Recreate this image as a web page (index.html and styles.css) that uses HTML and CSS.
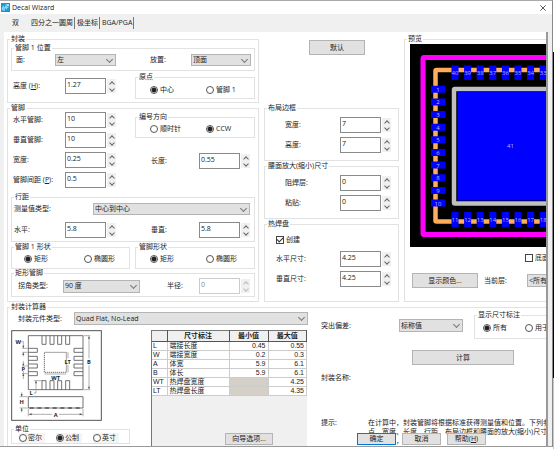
FILE: index.html
```html
<!DOCTYPE html>
<html lang="zh-CN">
<head>
<meta charset="utf-8">
<title>Decal Wizard</title>
<link rel="stylesheet" href="styles.css">
</head>
<body>
<div class="window">
  <header class="titlebar">
    <svg class="logo" viewBox="0 0 27 27" aria-hidden="true"><rect width="27" height="27" fill="#0e9bd8"/><path d="M4 22V14h5M9 20v-5h4v-5h6M5 10h4M16 19v-5h6M13 6h9v4" fill="none" stroke="#fff" stroke-width="2"/><circle cx="9" cy="21" r="2" fill="#fff"/><circle cx="21" cy="6" r="2.500" fill="#fff"/></svg>
    <h1>Decal Wizard</h1>
    <button class="close" aria-label="关闭"><svg viewBox="0 0 16 16"><path d="M1 1 15 15M15 1 1 15" fill="none" stroke="#222" stroke-width="2"/></svg></button>
  </header>
  <nav class="tabs">
    <a href="#dual">双</a><a href="#quad" class="active">四分之一圆周</a><a href="#polar">极坐标</a><a href="#bga">BGA/PGA</a>
  </nav>
  <main class="page">
    <div class="top">
      <div class="col">
        <fieldset class="decal">
          <legend>封装</legend>
          <fieldset class="place">
            <legend>管脚 1 位置</legend>
            <label for="side">面:</label>
            <span class="sel"><select id="side"><option>左</option></select></span>
            <label for="layer">放置:</label>
            <span class="sel"><select id="layer"><option>顶面</option></select></span>
          </fieldset>
          <div class="split">
            <div class="field"><label for="h">高度 (<u>H</u>):</label><span class="spin"><input id="h" value="1.27"><button aria-label="增加"></button><button aria-label="减少"></button></span></div>
            <fieldset class="radios"><legend>原点</legend><label><input type="radio" name="org" checked>中心</label><label><input type="radio" name="org">管脚 1</label></fieldset>
          </div>
        </fieldset>
        <fieldset class="pins">
          <legend>管脚</legend>
          <div class="split">
            <div class="stack">
              <div class="field"><label for="hp">水平管脚:</label><span class="spin"><input id="hp" value="10"><button aria-label="增加"></button><button aria-label="减少"></button></span></div>
              <div class="field"><label for="vp">垂直管脚:</label><span class="spin"><input id="vp" value="10"><button aria-label="增加"></button><button aria-label="减少"></button></span></div>
              <div class="field"><label for="pw">宽度:</label><span class="spin"><input id="pw" value="0.25"><button aria-label="增加"></button><button aria-label="减少"></button></span></div>
              <div class="field"><label for="pp">管脚间距 (<u>P</u>):</label><span class="spin"><input id="pp" value="0.5"><button aria-label="增加"></button><button aria-label="减少"></button></span></div>
            </div>
            <div class="direction">
              <fieldset class="radios"><legend>编号方向</legend><label><input type="radio" name="dir">顺时针</label><label><input type="radio" name="dir" checked>CCW</label></fieldset>
              <div class="field right"><label for="pl">长度:</label><span class="spin"><input id="pl" value="0.55"><button aria-label="增加"></button><button aria-label="减少"></button></span></div>
            </div>
          </div>
          <fieldset class="pitch">
            <legend>行距</legend>
            <div class="measure"><label for="mt">测量值类型:</label><span class="sel"><select id="mt"><option>中心到中心</option></select></span></div>
            <div class="split">
              <div class="field"><label for="rh">水平:</label><span class="spin"><input id="rh" value="5.8"><button aria-label="增加"></button><button aria-label="减少"></button></span></div>
              <div class="field right"><label for="rv">垂直:</label><span class="spin"><input id="rv" value="5.8"><button aria-label="增加"></button><button aria-label="减少"></button></span></div>
            </div>
          </fieldset>
          <div class="split shapes">
            <fieldset class="radios"><legend>管脚 1 形状</legend><label><input type="radio" name="s1" checked>矩形</label><label><input type="radio" name="s1">椭圆形</label></fieldset>
            <fieldset class="radios"><legend>管脚形状</legend><label><input type="radio" name="s2" checked>矩形</label><label><input type="radio" name="s2">椭圆形</label></fieldset>
          </div>
          <fieldset class="corner">
            <legend>矩形管脚</legend>
            <label for="ct">拐角类型:</label><span class="sel"><select id="ct"><option>90 度</option></select></span>
            <label for="rad">半径:</label><span class="spin off"><input id="rad" value="0" disabled><button aria-label="增加" disabled></button><button aria-label="减少" disabled></button></span>
          </fieldset>
        </fieldset>
      </div>
      <div class="col mid">
        <button class="btn default">默认</button>
        <fieldset class="sizes">
          <legend>布局边框</legend>
          <div class="field"><label for="bw">宽度:</label><span class="spin"><input id="bw" value="7"><button aria-label="增加"></button><button aria-label="减少"></button></span></div>
          <div class="field"><label for="bh">高度:</label><span class="spin"><input id="bh" value="7"><button aria-label="增加"></button><button aria-label="减少"></button></span></div>
        </fieldset>
        <fieldset class="sizes">
          <legend>腰面放大(缩小)尺寸</legend>
          <div class="field"><label for="sm">阻焊层:</label><span class="spin"><input id="sm" value="0"><button aria-label="增加"></button><button aria-label="减少"></button></span></div>
          <div class="field"><label for="pm">粘贴:</label><span class="spin"><input id="pm" value="0"><button aria-label="增加"></button><button aria-label="减少"></button></span></div>
        </fieldset>
        <fieldset class="sizes thermal">
          <legend>热焊盘</legend>
          <label class="check"><input type="checkbox" checked>创建</label>
          <div class="field"><label for="th">水平尺寸:</label><span class="spin"><input id="th" value="4.25"><button aria-label="增加"></button><button aria-label="减少"></button></span></div>
          <div class="field"><label for="tv">垂直尺寸:</label><span class="spin"><input id="tv" value="4.25"><button aria-label="增加"></button><button aria-label="减少"></button></span></div>
        </fieldset>
      </div>
      <fieldset class="preview">
        <legend>预览</legend>
        <svg class="canvas" viewBox="0 0 136 203" preserveAspectRatio="xMinYMin slice" role="img" aria-label="预览">
          <rect width="400" height="203" fill="#000"/>
          <rect x="13" y="13.500" width="300" height="177" rx="1" fill="none" stroke="#f0f" stroke-width="5"/>
          <rect x="25.500" y="26" width="300" height="151.500" rx="1" fill="none" stroke="#ffad5b" stroke-width="4.500"/>
          <rect x="44" y="45" width="300" height="114.500" rx="1" fill="none" stroke="#c0c0c0" stroke-width="4.500"/>
          <rect x="47.500" y="47.500" width="300" height="109" fill="#00f"/>
          <path d="M45 21.500v14.500M57.600 21.500v14.500M70.200 21.500v14.500M82.800 21.500v14.500M95.400 21.500v14.500M108 21.500v14.500M120.600 21.500v14.500M133.200 21.500v14.500M45 168v15M57.600 168v15M70.200 168v15M82.800 168v15M95.400 168v15M108 168v15M120.600 168v15M133.200 168v15M21 45.300h14.500M21 57.900h14.500M21 70.500h14.500M21 83.200h14.500M21 95.800h14.500M21 108.500h14.500M21 121.100h14.500M21 133.800h14.500M21 146.400h14.500M21 159h14.500" stroke="#00f" stroke-width="7"/>
          <g class="nums">
            <text x="45" y="31">40</text><text x="57.600" y="31">39</text><text x="70.200" y="31">38</text><text x="82.800" y="31">37</text><text x="95.400" y="31">36</text><text x="108" y="31">35</text><text x="120.600" y="31">34</text><text x="133.200" y="31">33</text>
            <text x="45" y="178">11</text><text x="57.600" y="178">12</text><text x="70.200" y="178">13</text><text x="82.800" y="178">14</text><text x="95.400" y="178">15</text><text x="108" y="178">16</text><text x="120.600" y="178">17</text><text x="133.200" y="178">18</text>
            <text x="28" y="47.500">1</text><text x="28" y="60">2</text><text x="28" y="73">3</text><text x="28" y="85.500">4</text><text x="28" y="98">5</text><text x="28" y="111">6</text><text x="28" y="123.500">7</text><text x="28" y="136">8</text><text x="28" y="149">9</text><text x="28" y="161.500">10</text>
            <text x="100.500" y="104">41</text>
          </g>
        </svg>
        <label class="check bottom"><input type="checkbox">底面</label>
        <div class="colors"><button class="btn">显示颜色...</button><label for="cur">当前层:</label><span class="sel"><select id="cur"><option>&lt;所有层&gt;</option></select></span></div>
      </fieldset>
    </div>
    <fieldset class="calc">
      <legend>封装计算器</legend>
      <div class="calc-grid">
        <section class="left">
          <div class="type"><label for="pt">封装元件类型:</label><span class="sel"><select id="pt"><option>Quad Flat, No-Lead</option></select></span></div>
          <div class="parts">
            <div class="drawing">
              <svg viewBox="34 75 273 273" role="img" aria-label="QFN">
                <rect x="36" y="77" width="269" height="269" fill="#fff" stroke="#555" stroke-width="3"/>
                <g fill="none" stroke="#555" stroke-width="2.500">
                  <path d="M86 92H250V254H86ZM127 92v26h12V92M151 92v26h12V92M174 92v26h12V92M198 92v26h12V92M127 254v-27h12v27M151 254v-27h12v27M174 254v-27h12v27M198 254v-27h12v27M86 130h27v12H86M86 154h27v12H86M86 177h27v12H86M86 200h27v12H86M250 130h-27v12h27M250 154h-27v12h27M250 177h-27v12h27M250 200h-27v12h27M86 275H250V309H86Z"/>
                  <path d="M134 142H200V202H134Z" stroke-dasharray="4 2"/>
                  <path d="M90 309H250" stroke-width="4" stroke-dasharray="12 11"/>
                </g>
                <g fill="none" stroke="#888" stroke-width="2">
                  <path d="M252 92h20M252 254h20M268 94v66M268 181v71M86 312v22M250 312v22M88 328h70M178 328h70M205 142v18M205 180v22M134 207h66M62 110h9v18M67 130h17M67 142h17M71 144v10M71 168v14M67 183h17M67 206h17M71 198v24M109 227v26M103 227h24M109 256v8h-7M60 275h24M60 309h24M66 262v12M66 310v12"/>
                </g>
                <path d="M265 101l3-8 3 8zM265 245l3 8 3-8zM96 325l-9 3 9 3zM240 325l9 3-9 3zM68 122l3 8 3-8zM68 150l3-8 3 8zM68 176l3 7 3-7zM68 213l3-7 3 7zM106 235l3-8 3 8zM63 267l3 8 3-8zM63 317l3-8 3 8z" fill="#555"/>
                <g class="dims"><text x="56" y="116">W</text><text x="71" y="199">P</text><text x="204" y="176">LT</text><text x="168" y="224">WT</text><text x="94" y="271">L</text><text x="66" y="297">H</text><text x="168" y="335">A</text><text x="268" y="177">B</text></g>
              </svg>
              <fieldset class="units"><legend>单位</legend><label><input type="radio" name="u">密尔</label><label><input type="radio" name="u" checked>公制</label><label><input type="radio" name="u">英寸</label></fieldset>
            </div>
            <div class="sheet">
              <table>
                <thead><tr><th></th><th>尺寸标注</th><th>最小值</th><th>最大值</th></tr></thead>
                <tbody>
                  <tr><td>L</td><td>端接长度</td><td>0.45</td><td>0.55</td></tr>
                  <tr><td>W</td><td>端接宽度</td><td>0.2</td><td>0.3</td></tr>
                  <tr><td>A</td><td>体宽</td><td>5.9</td><td>6.1</td></tr>
                  <tr><td>B</td><td>体长</td><td>5.9</td><td>6.1</td></tr>
                  <tr><td>WT</td><td>热焊盘宽度</td><td class="na"></td><td>4.25</td></tr>
                  <tr><td>LT</td><td>热焊盘长度</td><td class="na"></td><td>4.35</td></tr>
                </tbody>
              </table>
              <button class="btn">向导选项...</button>
            </div>
          </div>
        </section>
        <section class="result">
          <div class="bias">
            <label for="pb">突出偏差:</label><span class="sel"><select id="pb"><option>标称值</option></select></span>
            <fieldset class="radios"><legend>显示尺寸标注</legend><label><input type="radio" name="d" checked>所有</label><label><input type="radio" name="d">用于</label></fieldset>
          </div>
          <button class="btn run">计算</button>
          <p class="name">封装名称:</p>
          <div class="tip"><span>提示:</span><p>在计算中，封装管脚将根据标准获得测量值和位置。下列参数<br>点、宽度、长度、行距、布局边框和腰面的放大(缩小)尺寸。<br><span class="tail">，</span></p></div>
          <div class="actions"><button class="btn ok">确定</button><button class="btn">取消</button><button class="btn">帮助(<u>H</u>)</button></div>
        </section>
      </div>
    </fieldset>
  </main>
</div>
</body>
</html>
```
FILE: styles.css
```css
* { box-sizing: border-box; }
html { background: #fff; }
body {
  margin: 0;
  min-height: 100vh;
  display: flex;
  padding: 0 1px 2px 0;
  overflow: hidden;
  background: linear-gradient(#fff 52px, #000 52px, #000 378px, #c4c8d4 378px) right top / 1px 100% no-repeat;
  color: #222;
  font: 7px/8px "Open Sans", "Noto Sans CJK SC", sans-serif;
}
input, select, button { font: inherit; color: inherit; margin: 0; border-radius: 0; }
/* --in is a group's left inset; its caption is pulled back over it */
fieldset { --in: 0px; margin: 0; padding: 0 0 0 var(--in); min-width: 0; border: 1px solid #e2e2e2; }
legend { margin-left: calc(2px - var(--in)); padding: 0 1px; height: 8px; white-space: nowrap; }
label { white-space: nowrap; }
p { margin: 0; }

.window {
  flex: 1;
  min-width: 0;
  display: flex;
  flex-direction: column;
  background: #f0f0f0;
  border-top: 1px solid #aaa;
  border-right: 1px solid #888;
  border-bottom: 1px solid #999;
}
.titlebar { display: flex; align-items: center; height: 13px; padding: 0 6px 0 1px; background: #fff; }
.logo { width: 9px; height: 9px; }
.titlebar h1 { flex: 1; margin: 0 0 0 2px; font-size: 7px; font-weight: 400; }
.close { width: 6px; height: 6px; padding: 0; border: 0; background: none; display: flex; }
.tabs { display: flex; align-items: center; height: 18px; padding-left: 5px; }
.tabs a { padding: 2px 1px 2px 2px; border-right: 1px solid #777; color: inherit; text-decoration: none; }
.tabs a:first-child { padding: 2px 10px 2px 7px; border: 0; }

.page {
  flex: 1;
  min-height: 0;
  display: flex;
  flex-direction: column;
  gap: 1px;
  margin: 0 4px 0 4px;
  padding: 3px 0 0 3px;
  background: #fff;
  border-right: 2px solid #999;
  overflow: hidden;
}
.top { display: grid; grid-template-columns: 252px 135px minmax(0, 1fr); gap: 5px; }
.col { display: flex; flex-direction: column; min-width: 0; }
.split { display: grid; grid-template-columns: 119px 120px; gap: 5px; }

.field { display: grid; grid-template-columns: 52px 51px; align-items: center; padding-left: 2px; }
.field.right { grid-template-columns: 48px 51px; padding-left: 16px; }
.spin {
  display: grid;
  grid-template: 7px 7px / 41px 9px;
  column-gap: 1px;
  align-content: center;
  width: 51px;
  height: 16px;
}
.spin input {
  grid-row: 1 / 3;
  align-self: center;
  width: 41px;
  height: 16px;
  padding: 0 2px 3px 1px;
  border: 1px solid #8a8a8a;
  background: #fff;
}
.spin button { grid-column: 2; display: grid; place-items: center; padding: 0; border: 0; background: #f0f0f0; }
.spin button::before { content: ""; width: 3px; height: 3px; border: solid #666; border-width: 1px 0 0 1px; transform: translateY(1px) rotate(45deg); }
.spin button:last-child::before { transform: translateY(-1px) rotate(225deg); }
.spin.off { color: #888; }
.spin.off input { border-color: #ccc; }
.spin.off button::before { border-color: #bbb; }

.sel { position: relative; display: block; height: 12px; min-width: 0; }
.sel select { display: block; appearance: none; width: 100%; height: 100%; padding: 0 10px 0 1px; border: 1px solid #b4b4b4; background: #e1e1e1; }
.sel::after { content: ""; position: absolute; right: 4px; top: 3px; width: 4px; height: 4px; border: solid #777; border-width: 0 1px 1px 0; transform: rotate(45deg); }
.btn { height: 15px; padding: 0; border: 1px solid #b4b4b4; background: #e1e1e1; text-align: center; white-space: nowrap; }

input[type="radio"] { appearance: none; flex: none; width: 8px; height: 8px; border: 1px solid #555; border-radius: 50%; background: #fff; }
input[type="radio"]:checked { background: radial-gradient(circle, #222 2px, #fff 3px); }
input[type="checkbox"] { appearance: none; flex: none; display: grid; place-items: center; width: 8px; height: 8px; border: 1px solid #444; background: #fff; }
input[type="checkbox"]:checked::before { content: ""; width: 5px; height: 3px; border: solid #333; border-width: 0 0 1px 1px; transform: translateY(-1px) rotate(-45deg); }
.radios { --in: 14px; display: grid; grid-template-columns: 56px 1fr; padding-top: 3px; padding-bottom: 3px; }
.radios label, .units label, .check { display: flex; align-items: center; gap: 2px; height: 10px; }

.decal { --in: 3px; padding: 1px 3px 3px var(--in); }
.place { --in: 4px; display: grid; grid-template-columns: 39px 61px 34px 41px 60px; align-items: center; padding: 2px 4px 4px var(--in); }
.place label:nth-of-type(2) { grid-column: 4; }
.decal .split { margin-top: 2px; align-items: center; }
.decal .radios { padding-top: 4px; }
.pins { --in: 3px; margin-top: 1px; padding: 0 3px 4px var(--in); }
.stack { display: grid; gap: 4px; }
.direction { display: flex; flex-direction: column; justify-content: space-between; padding: 1px 0 19px; }
.pins > .pitch { margin-top: 5px; padding: 2px 0 3px; }
.measure { display: grid; grid-template-columns: 79px 157px; align-items: center; margin-bottom: 7px; padding-left: 2px; }
.pitch .split { grid-template-columns: 118px 119px; }
.pitch .field { padding-left: 2px; grid-template-columns: 51px 51px; }
.pitch .field.right { padding-left: 16px; grid-template-columns: 48px 51px; }
.shapes { margin-top: 1px; }
.shapes .radios { padding-bottom: 4px; }
.shapes .radios:first-child { --in: 12px; grid-template-columns: 60px 1fr; }
.corner { --in: 6px; display: grid; grid-template-columns: 45px 77px 27px 32px 51px; align-items: center; padding-top: 1px; padding-bottom: 2px; }
.corner .sel { height: 13px; }
.corner .spin { grid-column: 5; }
.corner label:nth-of-type(2) { grid-column: 4; }

.mid { gap: 1px; padding-top: 5px; }
.default { width: 56px; margin: 0 0 48px 45px; }
.sizes { display: grid; gap: 4px; padding: 5px 0 7px; }
.sizes .field { grid-template-columns: 55px 51px; padding-left: 20px; }
.thermal { flex: 1; align-content: start; padding-bottom: 0; }
.thermal .field { grid-template-columns: 64px 51px; padding-left: 11px; }
.thermal .check { margin: 2px 0 2px 11px; }

.preview { --in: 5px; border-right: 0; padding-top: 1px; overflow: hidden; }
.canvas { display: block; width: 100%; height: 203px; background: #000; }
.nums { font-size: 6px; fill: #b8b8ff; text-anchor: middle; }
.bottom { margin: 6px 0 10px 115px; }
.colors { display: grid; grid-template-columns: 66px 37px 60px; column-gap: 6px; align-items: center; padding-left: 2px; }
.colors .sel { height: 13px; }

.calc { flex: 1; min-height: 0; border-right: 0; border-bottom: 0; }
.calc-grid { display: grid; grid-template-columns: 301px minmax(0, 1fr); height: 100%; }
.left { display: flex; flex-direction: column; padding: 1px 1px 0 3px; }
.type { display: grid; grid-template-columns: 56px 1fr; align-items: center; padding-left: 7px; }
.type .sel { height: 13px; }
.parts { flex: 1; display: grid; grid-template-columns: 119px 156px; column-gap: 21px; margin-top: 5px; }
.drawing > svg { display: block; width: 91px; height: 91px; }
.dims { font: bold 17px "Open Sans", sans-serif; fill: #222; text-anchor: middle; }
.units { --in: 7px; display: flex; gap: 11px; margin-top: 4px; }
.units label { gap: 1px; width: 26px; background: #f4f4f4; }
.sheet { display: flex; flex-direction: column; justify-content: space-between; padding-bottom: 1px; background: #f0f0f0; border-left: 1px solid #777; }
.sheet .btn { width: 48px; height: 12px; margin-left: 73px; }
table { width: 100%; table-layout: fixed; border-collapse: collapse; font-family: "Liberation Sans", "Noto Sans CJK SC", sans-serif; border-top: 1px solid #777; }
th { height: 11px; padding: 0; border-right: 1px solid #555; border-bottom: 1px solid #555; font-weight: 700; }
td { height: 9px; padding: 0 2px; background: #fff; border: 1px solid #ccc; white-space: nowrap; }
td:first-child { padding: 0 1px; border-left: 0; }
th:nth-child(1) { width: 15px; }
th:nth-child(2) { width: 62px; }
th:nth-child(3) { width: 39px; }
td:nth-child(n+3) { text-align: right; }
td.na { background: #d4d0c8; }

.result { position: relative; padding: 0 0 0 12px; overflow: hidden; }
.bias { display: grid; grid-template-columns: 78px 64px minmax(0, 1fr); }
.bias > label { padding-top: 11px; }
.bias .sel { height: 13px; margin-top: 8px; }
.bias .radios { --in: 8px; grid-template-columns: 42px 1fr; margin-left: 11px; padding-top: 4px; padding-bottom: 5px; border-right: 0; }
.run { display: block; width: 102px; margin: 11px 0 9px 91px; }
.tip { display: grid; grid-template-columns: 47px minmax(0, 1fr); margin-top: 36px; line-height: 9px; }
.tip p { white-space: nowrap; }
.tail { margin-left: 28px; }
.actions { position: absolute; left: 48px; bottom: 1px; display: flex; gap: 6px; }
.actions .btn { width: 39px; height: 12px; }
.actions .ok { border-color: #0078d7; }
```
